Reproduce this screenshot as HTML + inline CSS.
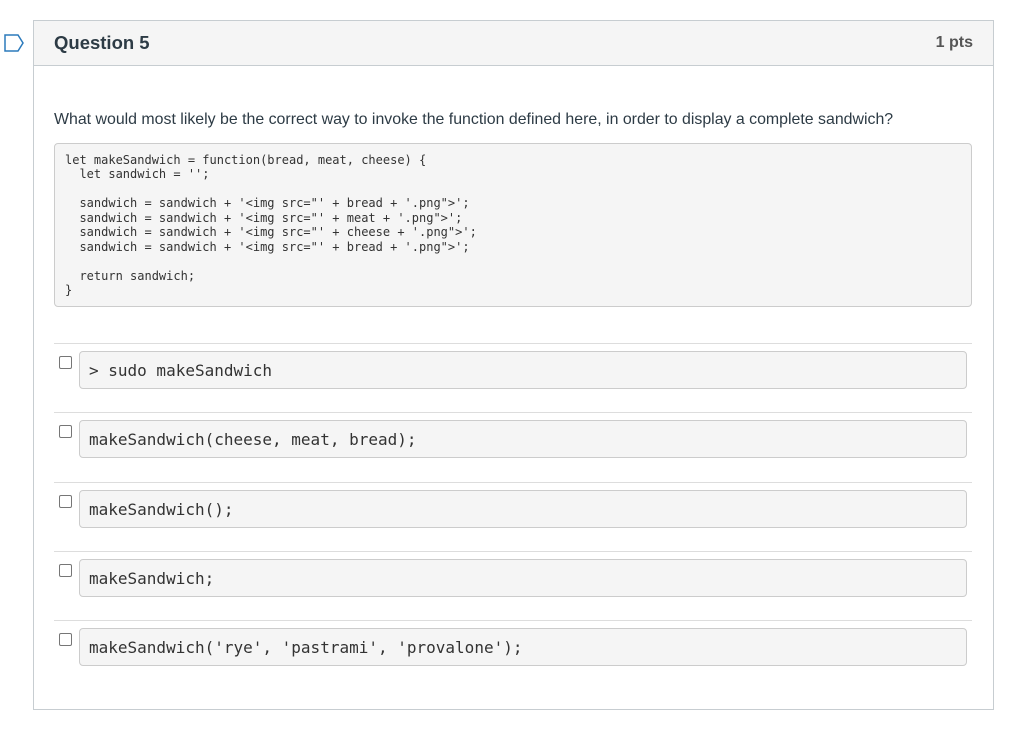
<!DOCTYPE html>
<html><head><style>
body{margin:0;background:#fff;font-family:"Liberation Sans",sans-serif;color:#2d3b45;width:1024px;height:736px;overflow:hidden;position:relative}
.flag{position:absolute;left:4px;top:34px}
.box{position:absolute;left:33px;top:20px;width:959px;height:688px;border:1px solid #c7cdd1}
.hdr{height:44px;background:#f5f5f5;border-bottom:1px solid #c7cdd1;position:relative}
.hdr h2{margin:0;position:absolute;left:20px;top:11px;font-size:18.5px;font-weight:bold;color:#2d3b45}
.hdr .pts{position:absolute;right:20px;top:13px;font-size:16px;font-weight:bold;color:#555}
.q{position:absolute;left:20px;top:90px;font-size:15.9px;color:#2d3b45}
pre{position:absolute;left:20px;top:122px;width:896px;height:143px;margin:0;padding:9px 10px 10px;background:#f5f5f5;border:1px solid #ccc;border-radius:4px;font-family:"DejaVu Sans Mono",monospace;font-size:12px;line-height:14.45px;color:#333}
.ans{position:absolute;left:20px;width:918px;border-top:1px solid #ddd}
.cb{position:absolute;left:5px;top:12px;width:11px;height:11px;border:1px solid #767676;border-radius:2px;background:#fff}
.code{position:absolute;left:25px;top:7px;width:888px;height:38px;background:#f5f5f5;border:1px solid #ccc;border-radius:4px;box-sizing:border-box;padding:0 9px;line-height:37px;font-family:"DejaVu Sans Mono",monospace;font-size:16px;color:#333;white-space:pre}
</style></head><body>
<svg class="flag" width="20" height="18"><path d="M1 1H14L19 9L14 17H1Z" fill="none" stroke="#2b7abc" stroke-width="1.5"/></svg>
<div class="box">
<div class="hdr"><h2>Question 5</h2><span class="pts">1 pts</span></div>
<div class="q">What would most likely be the correct way to invoke the function defined here, in order to display a complete sandwich?</div>
<pre>let makeSandwich = function(bread, meat, cheese) {
  let sandwich = '';

  sandwich = sandwich + '&lt;img src="' + bread + '.png"&gt;';
  sandwich = sandwich + '&lt;img src="' + meat + '.png"&gt;';
  sandwich = sandwich + '&lt;img src="' + cheese + '.png"&gt;';
  sandwich = sandwich + '&lt;img src="' + bread + '.png"&gt;';

  return sandwich;
}</pre>
<div class="ans" style="top:322px"><div class="cb"></div><div class="code">&gt; sudo makeSandwich</div></div>
<div class="ans" style="top:391px"><div class="cb"></div><div class="code">makeSandwich(cheese, meat, bread);</div></div>
<div class="ans" style="top:461px"><div class="cb"></div><div class="code">makeSandwich();</div></div>
<div class="ans" style="top:530px"><div class="cb"></div><div class="code">makeSandwich;</div></div>
<div class="ans" style="top:599px"><div class="cb"></div><div class="code">makeSandwich('rye', 'pastrami', 'provalone');</div></div>
</div>
</body></html>
